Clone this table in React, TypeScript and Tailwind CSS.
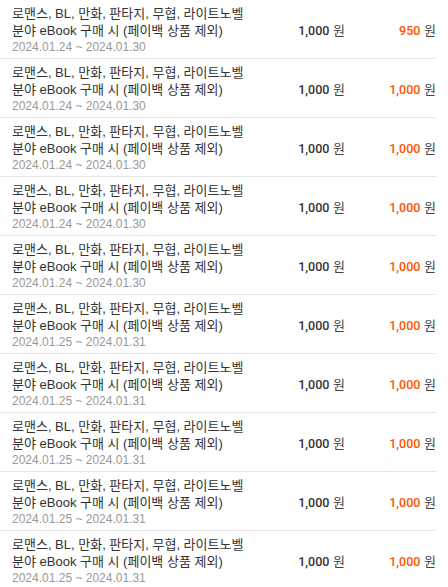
import React from 'react';

type Coupon = {
  period: string;
  price: string;
  sale: string;
};

const rows: Coupon[] = [
  { period: '2024.01.24 ~ 2024.01.30', price: '1,000', sale: '950' },
  { period: '2024.01.24 ~ 2024.01.30', price: '1,000', sale: '1,000' },
  { period: '2024.01.24 ~ 2024.01.30', price: '1,000', sale: '1,000' },
  { period: '2024.01.24 ~ 2024.01.30', price: '1,000', sale: '1,000' },
  { period: '2024.01.24 ~ 2024.01.30', price: '1,000', sale: '1,000' },
  { period: '2024.01.25 ~ 2024.01.31', price: '1,000', sale: '1,000' },
  { period: '2024.01.25 ~ 2024.01.31', price: '1,000', sale: '1,000' },
  { period: '2024.01.25 ~ 2024.01.31', price: '1,000', sale: '1,000' },
  { period: '2024.01.25 ~ 2024.01.31', price: '1,000', sale: '1,000' },
  { period: '2024.01.25 ~ 2024.01.31', price: '1,000', sale: '1,000' },
];

const Row = ({ item }: { item: Coupon }) => (
  <li className="flex items-center border-b border-[#e5e5e5] pl-3 pt-[5px] pb-[2px]">
    <div className="flex-1 leading-[17px]">
      <p className="text-[#333]">로맨스, BL, 만화, 판타지, 무협, 라이트노벨</p>
      <p className="text-[#333]">분야 eBook 구매 시 (페이백 상품 제외)</p>
      <p className="text-[12px] text-[#999]">{item.period}</p>
    </div>
    <div className="w-[72px] text-right text-[#444]">
      <span className="font-['Roboto'] text-[12.5px] font-medium text-[#333]">{item.price}</span> 원
    </div>
    <div className="w-[91px] text-right text-[#444]">
      <span className="font-['Roboto'] text-[12.5px] font-medium text-[#ff5400]">{item.sale}</span> 원
    </div>
  </li>
);

function App() {
  return (
    <div className="h-[587px] w-[448px] overflow-hidden bg-white font-['Liberation_Sans','Noto_Sans_CJK_KR',sans-serif] text-[13px]">
      <ul className="w-[436px]">
        {rows.map((r, i) => (
          <Row key={i} item={r} />
        ))}
      </ul>
    </div>
  );
}

export default App;
